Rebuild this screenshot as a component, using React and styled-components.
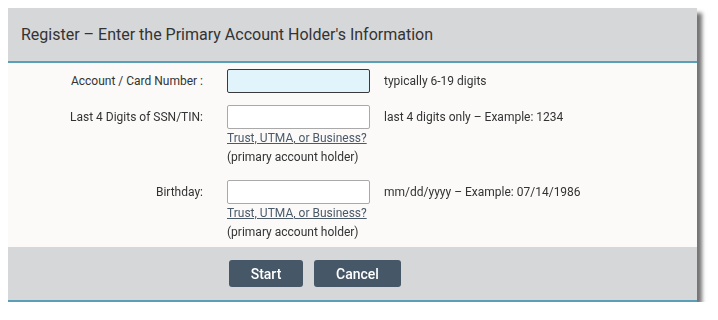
import React from 'react';
import styled, { createGlobalStyle } from 'styled-components';

const GlobalStyle = createGlobalStyle`
  body {
    margin: 0;
    background: #ffffff;
    font-family: Roboto, "Liberation Sans", Arial, sans-serif;
    color: #333333;
  }
`

const Page = styled.div`
  padding: 8px 21px 0 8px;
`

const Panel = styled.div`
  width: 689px;
  background: #fbfaf9;
  box-shadow: 6px 4px 4px -1px rgba(0, 0, 0, 0.55);
`

const Header = styled.div`
  height: 53px;
  display: flex;
  align-items: center;
  padding-left: 13px;
  background: #d6d7d9;
  border-bottom: 2px solid #5a9fb7;
  font-size: 16px;
  color: #333;
`

const Body = styled.div`
  padding: 6px 0 5px;
  display: flex;
  flex-direction: column;
  gap: 12px;
`

const Row = styled.div`
  display: flex;
  align-items: flex-start;
  font-size: 12px;
  & + & + & {
    margin-top: 1px;
  }
`

const Label = styled.div`
  width: 195px;
  height: 24px;
  display: flex;
  align-items: center;
  justify-content: flex-end;
  flex-shrink: 0;
`

const Field = styled.div`
  width: 143px;
  margin-left: 24px;
  display: flex;
  flex-direction: column;
  line-height: 19px;
`

const Input = styled.input`
  box-sizing: border-box;
  width: 143px;
  height: 24px;
  margin: 0;
  padding: 2px 3px;
  border: 1px solid ${p => (p.$active ? '#3a3a3a' : '#a9a9a9')};
  border-radius: 2px;
  background: ${p => (p.$active ? '#e1f3fb' : '#ffffff')};
  font-family: inherit;
  font-size: 13px;
  caret-color: #222;
  outline: none;
`

const Link = styled.a`
  color: #4b5a69;
  text-decoration: underline;
  white-space: nowrap;
  cursor: pointer;
`

const Note = styled.span`
  white-space: nowrap;
`

const Hint = styled.div`
  margin-left: 14px;
  height: 24px;
  display: flex;
  align-items: center;
  white-space: nowrap;
`

const Footer = styled.div`
  height: 53px;
  display: flex;
  align-items: center;
  gap: 11px;
  padding-left: 221px;
  background: #d6d7d9;
  border-bottom: 2px solid #5a9fb7;
`

const Button = styled.button`
  height: 27px;
  width: ${p => p.$w}px;
  border: none;
  border-radius: 3px;
  background: #465767;
  color: #ffffff;
  font-family: inherit;
  font-size: 14px;
  font-weight: 500;
  cursor: pointer;
`

const App = () => {
  return (
    <Page>
      <GlobalStyle />
      <Panel>
        <Header>Register – Enter the Primary Account Holder's Information</Header>

        <Body>
          <Row>
            <Label>Account / Card Number :</Label>
            <Field>
              <Input type="text" $active autoFocus defaultValue="" />
            </Field>
            <Hint>typically 6-19 digits</Hint>
          </Row>

          <Row>
            <Label>Last 4 Digits of SSN/TIN:</Label>
            <Field>
              <Input type="text" />
              <Link>Trust, UTMA, or Business?</Link>
              <Note>(primary account holder)</Note>
            </Field>
            <Hint>last 4 digits only – Example: 1234</Hint>
          </Row>

          <Row>
            <Label>Birthday:</Label>
            <Field>
              <Input type="text" />
              <Link>Trust, UTMA, or Business?</Link>
              <Note>(primary account holder)</Note>
            </Field>
            <Hint>mm/dd/yyyy – Example: 07/14/1986</Hint>
          </Row>
        </Body>

        <Footer>
          <Button $w={74}>Start</Button>
          <Button $w={87}>Cancel</Button>
        </Footer>
      </Panel>
    </Page>
  )
}

export default App
